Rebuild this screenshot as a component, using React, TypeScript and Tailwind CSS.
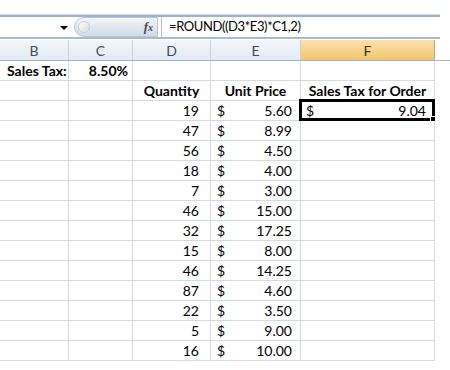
import React from "react";

const cols = ["B", "C", "D", "E", "F"];
const widths = ["w-[69px]", "w-[64px]", "w-[78px]", "w-[90px]", "w-[134px]"];

const orders: [number, string][] = [
  [19, "5.60"],
  [47, "8.99"],
  [56, "4.50"],
  [18, "4.00"],
  [7, "3.00"],
  [46, "15.00"],
  [32, "17.25"],
  [15, "8.00"],
  [46, "14.25"],
  [87, "4.60"],
  [22, "3.50"],
  [5, "9.00"],
  [16, "10.00"],
];

const cell = "h-[20px] shrink-0 border-r border-b border-[#d4d9e2] flex items-center";

function FormulaBar() {
  return (
    <div className="w-[440px]">
      <div className="h-[1px] bg-[#d3deeb]" />
      <div className="h-[2px] bg-[#9fb2c9]" />
      <div className="flex h-[22px] items-center border-b-2 border-[#a9bbd0] bg-white">
        {/* name box */}
        <div className="relative w-[74px] h-full">
          <div className="absolute left-[60px] top-[9px] w-0 h-0 border-l-[4px] border-r-[4px] border-t-[4px] border-l-transparent border-r-transparent border-t-black" />
        </div>
        {/* cancel/enter pill */}
        <div className="relative h-[20px] w-[84px] rounded-l-full border border-[#b8c6d8] bg-gradient-to-b from-[#f3f6fa] to-[#cfdae8] flex items-center">
          <div className="ml-[3px] w-[12px] h-[12px] rounded-full border border-[#c5cdd7] bg-gradient-to-br from-[#ffffff] to-[#d8dee6]" />
          <span className="ml-auto mr-[4px] text-[13px] italic font-bold text-[#4a4a4a] [font-family:'Liberation_Serif',serif]">
            f<span className="text-[10px]">x</span>
          </span>
        </div>
        <div className="w-[1px] h-full bg-[#b1c1d4] ml-[3px]" />
        <div className="pl-[7px] text-[13px] tracking-[-0.4px] text-black [font-family:Lato,sans-serif]">=ROUND((D3*E3)*C1,2)</div>
      </div>
    </div>
  );
}

function HeaderRow() {
  return (
    <div className="flex h-[21px] border-b border-[#9eb6ce]">
      {cols.map((c, i) => (
        <div
          key={c}
          className={`${widths[i]} shrink-0 h-full border-r flex items-center justify-center text-[14px] ${
            c === "F"
              ? "bg-gradient-to-b from-[#fbe2ae] to-[#f2c46a] border-[#c9a45e] text-[#3d3520]"
              : "bg-gradient-to-b from-[#f4f7fb] to-[#e3eaf4] border-[#c5d1df] text-[#3e4b5b]"
          }`}
        >
          {c}
        </div>
      ))}
    </div>
  );
}

export default function App() {
  return (
    <div className="w-[450px] h-[370px] bg-white overflow-hidden [font-family:Lato,'Liberation_Sans',sans-serif]">
      <div className="h-[14px]" />
      <FormulaBar />
      <div className="h-[1px]" />
      <HeaderRow />
      {/* row 1 */}
      <div className="flex text-[14px] text-black">
        <div className={`${cell} ${widths[0]} pl-[7px] font-bold`}>Sales Tax:</div>
        <div className={`${cell} ${widths[1]} justify-end pr-[4px] font-bold`}>8.50%</div>
        <div className={`${cell} ${widths[2]}`} />
        <div className={`${cell} ${widths[3]}`} />
        <div className={`${cell} ${widths[4]}`} />
      </div>
      {/* row 2 */}
      <div className="flex text-[14px] text-black font-bold">
        <div className={`${cell} ${widths[0]}`} />
        <div className={`${cell} ${widths[1]}`} />
        <div className={`${cell} ${widths[2]} justify-center`}>Quantity</div>
        <div className={`${cell} ${widths[3]} justify-center`}>Unit Price</div>
        <div className={`${cell} ${widths[4]} justify-center`}>Sales Tax for Order</div>
      </div>
      {orders.map(([qty, price], i) => (
        <div key={i} className="flex text-[14px] text-black">
          <div className={`${cell} ${widths[0]}`} />
          <div className={`${cell} ${widths[1]}`} />
          <div className={`${cell} ${widths[2]} justify-end pr-[11px]`}>{qty}</div>
          <div className={`${cell} ${widths[3]} justify-between pl-[6px] pr-[8px]`}>
            <span>$</span>
            <span>{price}</span>
          </div>
          {i === 0 ? (
            <div className={`${cell} ${widths[4]} relative`}>
              <div className="absolute -left-[2px] -top-[2px] w-[136px] h-[22px] border-[3px] border-black flex items-center justify-between pl-[4px] pr-[6px]">
                <span>$</span>
                <span>9.04</span>
                <div className="absolute -right-[4px] -bottom-[4px] w-[6px] h-[6px] bg-black border border-white" />
              </div>
            </div>
          ) : (
            <div className={`${cell} ${widths[4]}`} />
          )}
        </div>
      ))}
    </div>
  );
}
